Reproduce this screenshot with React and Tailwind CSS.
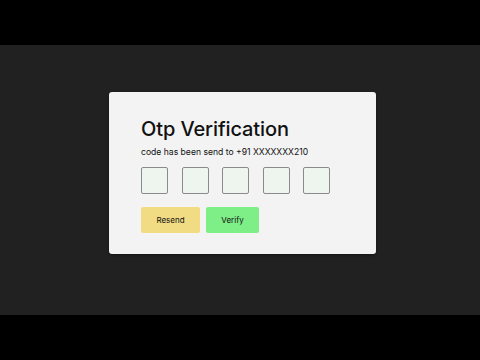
export default function App() {
  const boxes = [0, 1, 2, 3, 4];
  return (
    <div className="w-[480px] h-[360px] flex flex-col bg-black font-['Inter',sans-serif]">
      <div className="h-[45px] bg-black"></div>
      <div className="h-[270px] bg-[#212121] pt-[47px] pl-[109px]">
        <div className="w-[267px] h-[162px] bg-[#f3f3f3] rounded-[3px] shadow-[0_1px_3px_rgba(0,0,0,0.4)] pl-[32px] pt-[24px]">
          <div className="text-[20px] leading-[26px] font-medium text-[#111] tracking-[-0.1px]">
            Otp Verification
          </div>
          <div className="text-[8.6px] leading-[12px] text-[#111] mt-[4px]">
            code has been send to +91 XXXXXXX210
          </div>
          <div className="flex gap-[13.5px] mt-[9px]">
            {boxes.map((b) => (
              <div
                key={b}
                className="w-[27px] h-[27px] rounded-[2px] border border-[#8a8a8a] bg-[#eef5ef]"
              ></div>
            ))}
          </div>
          <div className="flex gap-[6px] mt-[13px]">
            <button className="w-[59px] h-[26px] rounded-[2px] bg-[#f1dc83] text-[8px] text-[#111]">
              Resend
            </button>
            <button className="w-[53px] h-[26px] rounded-[2px] bg-[#7eee87] text-[8px] text-[#111]">
              Verify
            </button>
          </div>
        </div>
      </div>
      <div className="h-[45px] bg-black"></div>
    </div>
  );
}
